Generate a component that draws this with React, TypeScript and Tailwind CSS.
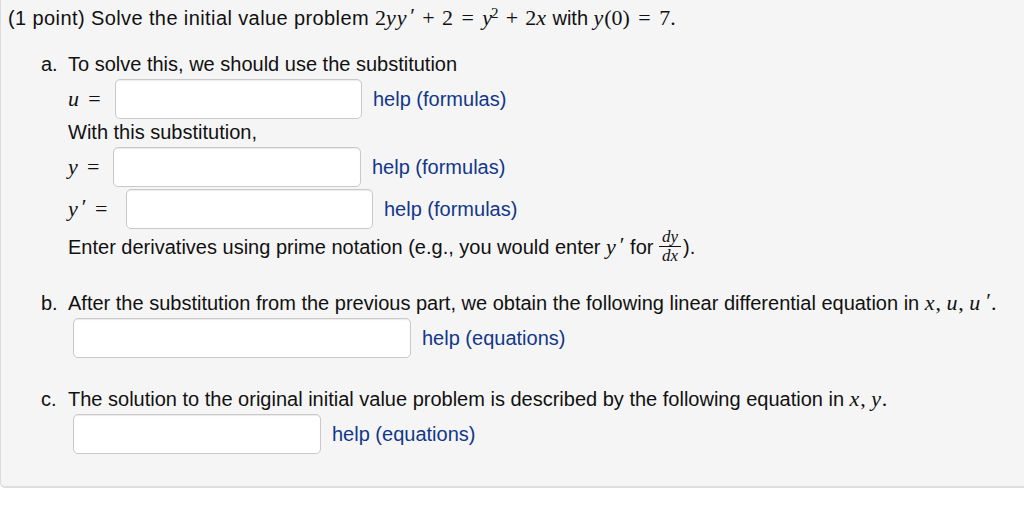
import { ReactNode } from 'react';

const serif = { fontFamily: '"Liberation Serif", "Times New Roman", serif' };

function M({ children, className = '' }: { children: ReactNode; className?: string }) {
    return (
        <span className={`text-[22px] leading-[22px] whitespace-nowrap tracking-normal ${className}`} style={serif}>
            {children}
        </span>
    );
}

function I({ children }: { children: ReactNode }) {
    return <i className="pr-[0.04em]">{children}</i>;
}

// binary operator / relation with TeX-like width and spacing
function Op({ children, rel = false }: { children: ReactNode; rel?: boolean }) {
    return (
        <span className={`inline-block w-[0.778em] text-center ${rel ? 'mx-[0.278em]' : 'mx-[0.222em]'}`}>
            {children}
        </span>
    );
}

function Prime({ gap = 'ml-[3px]' }: { gap?: string }) {
    return <span className={`inline-block ${gap} relative -top-[2px]`}>′</span>;
}

function Answer({ width, help }: { width: string; help: string }) {
    return (
        <>
            <div
                className={`${width} h-[40px] bg-white border border-[#c9c9c9] rounded-[5px] shadow-[inset_0_1px_1px_rgba(0,0,0,0.08)]`}
            />
            <a className="ml-[11px] text-[#12378a] cursor-pointer">{help}</a>
        </>
    );
}

export default function App() {
    return (
        <div
            className="w-[1030px] h-[488px] bg-[#f5f5f5] border-l border-b-2 border-[#dedede] rounded-bl-[5px] text-[20px] leading-[22px] text-[#111]"
            style={{ fontFamily: '"Liberation Sans", Arial, sans-serif' }}
        >
            <div className="pt-[7px] pl-[7px] flex items-baseline">
                <span className="tracking-[0.4px]">(1 point) Solve the initial value problem&nbsp;</span>
                <M>
                    2<I>y</I>
                    <I>y</I>
                    <Prime />
                    <Op>+</Op>2<Op rel>=</Op>
                    <I>y</I>
                    <sup className="text-[15px] -ml-[2px]">2</sup>
                    <Op>+</Op>2<I>x</I>
                </M>
                <span>&nbsp;with&nbsp;</span>
                <M>
                    <I>y</I>(0)<Op rel>=</Op>7.
                </M>
            </div>

            {/* part a */}
            <div className="mt-[24px] flex">
                <div className="w-[67px] pl-[40px]">a.</div>
                <div className="flex flex-col">
                    <div>To solve this, we should use the substitution</div>
                    <div className="mt-[4px] flex items-center">
                        <M className="w-[47px]">
                            <I>u</I>
                            <Op rel>=</Op>
                        </M>
                        <Answer width="w-[247px]" help="help (formulas)" />
                    </div>
                    <div className="mt-[2px]">With this substitution,</div>
                    <div className="mt-[4px] flex items-center">
                        <M className="w-[45px]">
                            <I>y</I>
                            <Op rel>=</Op>
                        </M>
                        <Answer width="w-[248px]" help="help (formulas)" />
                    </div>
                    <div className="mt-[2px] flex items-center">
                        <M className="w-[58px]">
                            <I>y</I>
                            <Prime />
                            <Op rel>=</Op>
                        </M>
                        <Answer width="w-[247px]" help="help (formulas)" />
                    </div>
                    <div className="mt-[7px] h-[22px] flex items-center">
                        <span>Enter derivatives using prime notation (e.g., you would enter&nbsp;</span>
                        <M>
                            <I>y</I>
                            <Prime />
                        </M>
                        <span>&nbsp;for&nbsp;</span>
                        <span
                            className="inline-flex flex-col items-center text-[17px] leading-[18px] italic -mt-[2px]"
                            style={serif}
                        >
                            <span className="px-[3px] border-b border-[#111]">dy</span>
                            <span>dx</span>
                        </span>
                        <span className="ml-[2px]">).</span>
                    </div>
                </div>
            </div>

            {/* part b */}
            <div className="mt-[34px] flex">
                <div className="w-[67px] pl-[40px]">b.</div>
                <div className="flex flex-col">
                    <div className="flex items-baseline">
                        <span>
                            After the substitution from the previous part, we obtain the following linear differential equation in&nbsp;
                        </span>
                        <M>
                            <I>x</I>, <I>u</I>, <I>u</I>
                            <Prime gap="ml-[5px]" />.
                        </M>
                    </div>
                    <div className="mt-[4px] ml-[5px] flex items-center">
                        <Answer width="w-[338px]" help="help (equations)" />
                    </div>
                </div>
            </div>

            {/* part c */}
            <div className="mt-[30px] flex">
                <div className="w-[67px] pl-[40px]">c.</div>
                <div className="flex flex-col">
                    <div className="flex items-baseline">
                        <span>
                            The solution to the original initial value problem is described by the following equation in&nbsp;
                        </span>
                        <M>
                            <I>x</I>, <I>y</I>.
                        </M>
                    </div>
                    <div className="mt-[4px] ml-[5px] flex items-center">
                        <Answer width="w-[248px]" help="help (equations)" />
                    </div>
                </div>
            </div>
        </div>
    );
}
